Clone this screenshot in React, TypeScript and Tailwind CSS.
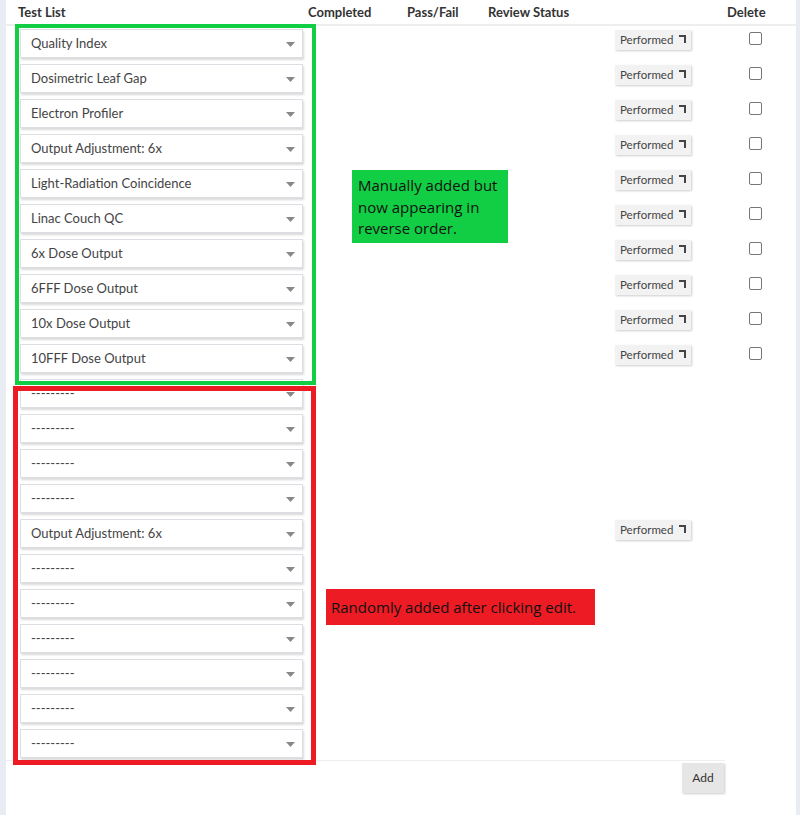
import React from 'react';

// Test list rows, as shown in the edit form
interface Row {
  label: string;
  performed: boolean;
  del: boolean;
}

const manual = [
  'Quality Index',
  'Dosimetric Leaf Gap',
  'Electron Profiler',
  'Output Adjustment: 6x',
  'Light-Radiation Coincidence',
  'Linac Couch QC',
  '6x Dose Output',
  '6FFF Dose Output',
  '10x Dose Output',
  '10FFF Dose Output',
];

const rows: Row[] = [
  ...manual.map((label) => ({ label, performed: true, del: true })),
  ...Array.from({ length: 11 }, (_, i) =>
    i === 4
      ? { label: 'Output Adjustment: 6x', performed: true, del: false }
      : { label: '---------', performed: false, del: false }
  ),
];

const SelectBox: React.FC<{ label: string }> = ({ label }) => (
  <div className="mt-[3px] ml-[14px] w-[283px] h-[29px] bg-white border border-[#dcdee3] shadow-[1px_2px_2px_rgba(0,0,0,0.15)] flex items-center justify-between pl-[10px] pr-[7px]">
    <span className="text-[13px] text-[#444]">{label}</span>
    <svg width="9" height="5" viewBox="0 0 9 5" className="mt-[2px]">
      <path d="M0 0 H9 L4.5 5 Z" fill="#888" />
    </svg>
  </div>
);

const PerformedTag: React.FC = () => (
  <div className="mt-[4px] w-[76px] h-[20px] bg-[#f2f2f2] shadow-[1px_1px_2px_rgba(0,0,0,0.2)] flex items-start pl-[5px] pr-[4px] gap-[6px]">
    <span className="text-[11.5px] leading-[20px] text-[#444]">Performed</span>
    <svg width="7" height="8" viewBox="0 0 7 8" className="mt-[5px]">
      <path d="M0 0 H7 V8 H5 V2 H0 Z" fill="#444" />
    </svg>
  </div>
);

export default function App() {
  return (
    <div className="h-[815px] w-[800px] flex bg-white font-['Lato',sans-serif]">
      <div className="w-[6px] bg-[#e9ecf2]" />
      <div className="relative flex-1 bg-white">
        {/* header */}
        <div className="grid grid-cols-[296px_99px_81px_127px_103px_74px] h-[26px] border-b-2 border-[#eeeeee] text-[13px] font-bold text-[#333]">
          <div className="pl-3 leading-[24px]">Test List</div>
          <div className="pl-[6px] leading-[24px]">Completed</div>
          <div className="pl-[6px] leading-[24px]">Pass/Fail</div>
          <div className="pl-[6px] leading-[24px]">Review Status</div>
          <div />
          <div className="pl-[15px] leading-[24px]">Delete</div>
        </div>
        {/* rows */}
        <div className="w-[719px]">
          {rows.map((r, i) => (
            <div key={i} className="grid grid-cols-[296px_99px_81px_127px_103px_74px] h-[35px]">
              <div>
                <SelectBox label={r.label} />
              </div>
              <div />
              <div />
              <div />
              <div className="pl-[6px]">{r.performed && <PerformedTag />}</div>
              <div className="pl-[37px] pt-[6px]">
                {r.del && <div className="w-[13px] h-[13px] border-[1.5px] border-[#777] rounded-[2px] bg-white" />}
              </div>
            </div>
          ))}
        </div>
        {/* footer */}
        <div className="-mt-[1px] w-[719px] border-t border-[#eeeeee] flex justify-end pt-[2px] pr-[1px]">
          <button className="w-[42px] h-[30px] bg-[#e6e6e6] shadow-[1px_1px_2px_rgba(0,0,0,0.2)] text-[12px] text-[#333]">
            Add
          </button>
        </div>

        {/* annotations */}
        <div className="absolute left-[9px] top-[24px] w-[301px] h-[361px] border-4 border-[#12ce44]" />
        <div className="absolute left-[7px] top-[386px] w-[303px] h-[379px] border-[5px] border-[#ed1c24]" />
        <div className="absolute left-[346px] top-[170px] w-[156px] h-[73px] bg-[#12ce44] pl-[6px] pt-[5px] text-[15px] leading-[21.5px] text-[#111] font-['Open_Sans',sans-serif]">
          Manually added but now appearing in reverse order.
        </div>
        <div className="absolute left-[320px] top-[589px] w-[269px] h-[36px] bg-[#ed1c24] pl-[5px] text-[15px] leading-[36px] text-[#111] font-['Open_Sans',sans-serif]">
          Randomly added after clicking edit.
        </div>
      </div>
      <div className="w-[4px] bg-[#e9ecf2]" />
    </div>
  );
}
